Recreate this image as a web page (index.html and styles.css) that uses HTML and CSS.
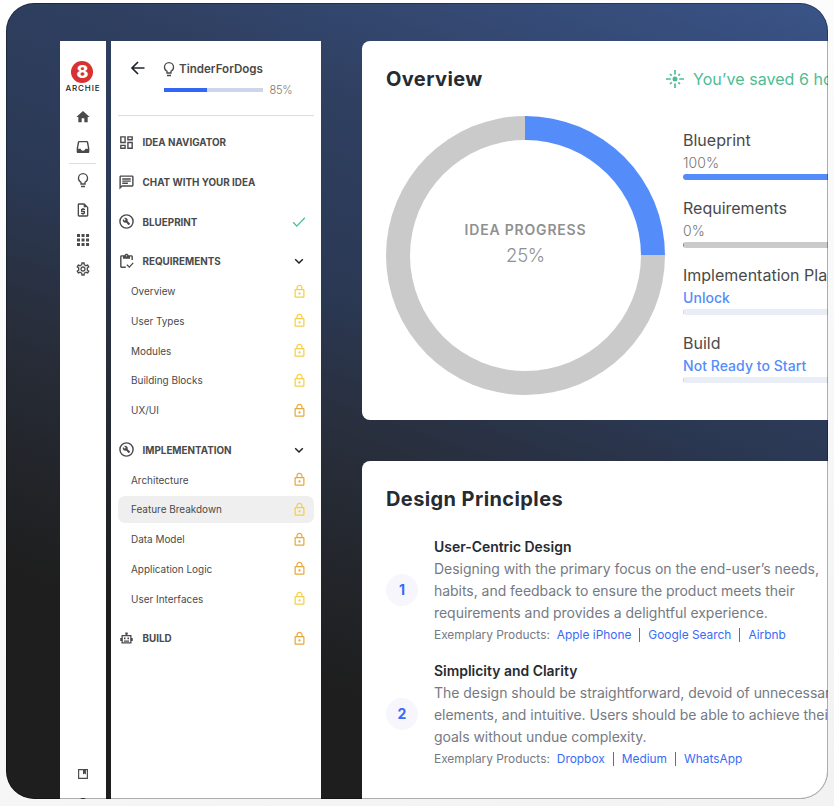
FILE: index.html
```html
<!DOCTYPE html>
<html lang="en">
<head>
  <meta charset="UTF-8" />
  <meta name="viewport" content="width=device-width, initial-scale=1.0" />
  <title>Archie - TinderForDogs</title>
  <link rel="stylesheet" href="styles.css">
</head>
<body>
  <svg class="sprite">
    <symbol id="home" viewBox="0 0 24 24"><path d="M10 20v-6h4v6h5v-8h3L12 3 2 12h3v8z"/></symbol>
    <symbol id="inbox" viewBox="0 0 24 24"><path d="M6 3h12c.9 0 1.600.6 1.800 1.500L21.500 14v5c0 1.100-.9 2-2 2h-15c-1.100 0-2-.9-2-2v-5L4.200 4.500C4.400 3.600 5.100 3 6 3zm.3 2L4.500 14.500H8.500c.3 1.700 1.700 3 3.500 3s3.200-1.300 3.500-3h4L17.700 5z"/></symbol>
    <symbol id="bulb" viewBox="0 0 24 24"><path d="M9 18h6v-2.600c2.200-1.100 3.800-3.400 3.800-6.100A6.800 6.800 0 0 0 5.200 9.300c0 2.700 1.600 5 3.800 6.100zM9 21.800h6" fill="none" stroke="currentColor" stroke-width="2"/></symbol>
    <symbol id="quote" viewBox="0 0 24 24"><path d="M14 2H6c-1.100 0-2 .9-2 2v16c0 1.100.9 2 2 2h12c1.100 0 2-.9 2-2V8l-6-6zM6 20V4h7v4h5v12H6zm5-1h2v-1h1c.55 0 1-.45 1-1v-3c0-.55-.45-1-1-1h-3v-1h4v-2h-2V9h-2v1h-1c-.55 0-1 .45-1 1v3c0 .55.45 1 1 1h3v1H9v2h2v1z"/></symbol>
    <symbol id="apps" viewBox="0 0 24 24"><path d="M3 3h4.500v4.500H3zM9.800 3h4.500v4.500H9.800zM16.600 3h4.500v4.500h-4.500zM3 9.800h4.500v4.500H3zM9.800 9.800h4.500v4.500H9.800zM16.600 9.800h4.500v4.500h-4.500zM3 16.600h4.500v4.500H3zM9.800 16.600h4.500v4.500H9.800zM16.600 16.600h4.500v4.500h-4.500z"/></symbol>
    <symbol id="gear" viewBox="0 0 24 24"><path d="M19.43 12.98c.04-.32.07-.64.07-.98 0-.34-.03-.66-.07-.98l2.110-1.650c.19-.15.24-.42.12-.64l-2-3.460c-.09-.16-.26-.25-.44-.25-.06 0-.12.01-.17.03l-2.490 1c-.52-.4-1.080-.73-1.690-.98l-.38-2.650C14.460 2.180 14.250 2 14 2h-4c-.25 0-.46.18-.49.42l-.38 2.650c-.61.25-1.170.59-1.690.98l-2.490-1c-.06-.02-.12-.03-.18-.03-.17 0-.34.09-.43.25l-2 3.460c-.13.22-.07.49.12.64l2.110 1.650c-.04.32-.07.65-.07.98 0 .33.03.66.07.98l-2.110 1.650c-.19.15-.24.42-.12.64l2 3.460c.09.16.26.25.44.25.06 0 .12-.01.17-.03l2.490-1c.52.4 1.080.73 1.690.98l.38 2.650c.03.24.24.42.49.42h4c.25 0 .46-.18.49-.42l.38-2.650c.61-.25 1.170-.59 1.690-.98l2.490 1c.06.02.12.03.18.03.17 0 .34-.09.43-.25l2-3.460c.12-.22.07-.49-.12-.64l-2.110-1.650zm-1.980-1.710c.04.31.05.52.05.73 0 .21-.02.43-.05.73l-.14 1.130.89.7 1.080.84-.7 1.210-1.270-.51-1.040-.42-.9.68c-.43.32-.84.56-1.250.73l-1.060.43-.16 1.130-.2 1.350h-1.400l-.19-1.350-.16-1.130-1.060-.43c-.43-.18-.83-.41-1.230-.71l-.91-.7-1.060.43-1.270.51-.7-1.210 1.080-.84.89-.7-.14-1.130c-.03-.31-.05-.54-.05-.74s.02-.43.05-.73l.14-1.130-.89-.7-1.080-.84.7-1.210 1.270.51 1.040.42.9-.68c.43-.32.84-.56 1.250-.73l1.060-.43.16-1.130.2-1.350h1.390l.19 1.350.16 1.130 1.060.43c.43.18.83.41 1.230.71l.91.7 1.060-.43 1.270-.51.7 1.210-1.070.85-.89.7.14 1.130zM12 8c-2.210 0-4 1.790-4 4s1.790 4 4 4 4-1.790 4-4-1.790-4-4-4zm0 6c-1.100 0-2-.9-2-2s.9-2 2-2 2 .9 2 2-.9 2-2 2z"/></symbol>
    <symbol id="book" viewBox="0 0 24 24"><path d="M4.500 4.500h15v15h-15z" fill="none" stroke="currentColor" stroke-width="2"/><path d="M12 5h5v8l-2.500-2-2.500 2z"/></symbol>
    <symbol id="dashboard" viewBox="0 0 24 24"><path d="M19 5v2h-4V5h4M9 5v6H5V5h4m10 8v6h-4v-6h4M9 17v2H5v-2h4M21 3h-8v6h8V3zM11 3H3v10h8V3zm10 8h-8v10h8V11zm-10 4H3v6h8v-6z"/></symbol>
    <symbol id="chat" viewBox="0 0 24 24"><path d="M4 4h16v12H5.170L4 17.170V4m0-2c-1.100 0-2 .9-2 2v18l4-4h14c1.100 0 2-.9 2-2V4c0-1.100-.9-2-2-2H4zm2 10h8v2H6v-2zm0-3h12v2H6V9zm0-3h12v2H6V6z"/></symbol>
    <symbol id="wrench" viewBox="0 0 24 24"><circle cx="12" cy="12" r="9.300" fill="none" stroke="currentColor" stroke-width="2"/><path d="M13.490 11.380c.43-1.220.17-2.640-.81-3.620-1.110-1.110-2.790-1.300-4.100-.59l2.350 2.350-1.410 1.410-2.350-2.350c-.71 1.320-.52 2.990.59 4.100.98.98 2.400 1.240 3.620.81l3.410 3.410c.2.2.51.2.71 0l1.400-1.400c.2-.2.2-.51 0-.71l-3.410-3.410z"/></symbol>
    <symbol id="clipboard" viewBox="0 0 24 24"><path d="M5 5h2v3h10V5h2v5h2V5c0-1.100-.9-2-2-2h-4.180C14.400 1.840 13.300 1 12 1s-2.400.84-2.820 2H5c-1.100 0-2 .9-2 2v14c0 1.100.9 2 2 2h6v-2H5V5zm7-2c.55 0 1 .45 1 1s-.45 1-1 1-1-.45-1-1 .45-1 1-1z"/><path d="M12.500 16.500l3.500 3.500 5.500-6" fill="none" stroke="currentColor" stroke-width="1.800"/></symbol>
    <symbol id="robot" viewBox="0 0 24 24"><path d="M5 7.500h14v11.500H5zM12 7V4M8 16h8" fill="none" stroke="currentColor" stroke-width="2"/><path d="M10 2.500h4v3h-4zM2 11h3v5H2zM19 11h3v5h-3zM8 10.500h2.500V13H8zM13.500 10.500H16V13h-2.500z"/></symbol>
    <symbol id="lock" viewBox="0 0 24 24"><path d="M18 8h-1V6c0-2.760-2.240-5-5-5S7 3.240 7 6v2H6c-1.100 0-2 .9-2 2v10c0 1.100.9 2 2 2h12c1.100 0 2-.9 2-2V10c0-1.100-.9-2-2-2zM9 6c0-1.660 1.340-3 3-3s3 1.340 3 3v2H9V6zm9 14H6V10h12v10zm-6-3.200c1 0 1.800-.8 1.800-1.800s-.8-1.800-1.800-1.800-1.800.8-1.800 1.800.8 1.800 1.800 1.800z"/></symbol>
    <symbol id="chevron" viewBox="0 0 12 12"><path d="M2.200 4.200L6 8l3.800-3.800" fill="none" stroke="currentColor" stroke-width="1.500"/></symbol>
    <symbol id="check" viewBox="0 0 14 12"><path d="M1.200 6.200l3.600 3.900 8-8.400" fill="none" stroke="currentColor" stroke-width="1.300"/></symbol>
    <symbol id="back" viewBox="0 0 16 16"><path d="M14.500 8H2.200M8 2L2 8l6 6" fill="none" stroke="currentColor" stroke-width="1.700"/></symbol>
    <symbol id="spark" viewBox="0 0 18 18"><circle cx="9" cy="9" r="2.500"/><path d="M9 0v4.500M9 13.500V18M0 9h4.800M13.200 9H18M4 4l1.700 1.700M12.300 12.300L14 14M4 14l1.700-1.700M12.300 5.700L14 4" fill="none" stroke="currentColor" stroke-width="1.700"/></symbol>
  </svg>

  <div class="frame">
    <nav class="rail">
      <div class="logo">
        <div class="logo-mark">8</div>
        <div class="logo-name">ARCHIE</div>
      </div>
      <div class="rail-icons">
        <svg><use href="#home"/></svg>
        <svg><use href="#inbox"/></svg>
        <hr>
        <svg><use href="#bulb"/></svg>
        <svg><use href="#quote"/></svg>
        <svg><use href="#apps"/></svg>
        <svg><use href="#gear"/></svg>
      </div>
      <div class="rail-bottom">
        <svg><use href="#book"/></svg>
        <span class="avatar"></span>
      </div>
    </nav>

    <aside class="panel">
      <div class="project">
        <svg class="back"><use href="#back"/></svg>
        <div class="project-info">
          <div class="project-name"><svg><use href="#bulb"/></svg>TinderForDogs</div>
          <div class="project-progress"><div class="track"><div class="fill"></div></div>85%</div>
        </div>
      </div>

      <div class="menu">
        <div class="head"><svg><use href="#dashboard"/></svg>IDEA NAVIGATOR</div>
        <div class="head"><svg><use href="#chat"/></svg>CHAT WITH YOUR IDEA</div>
        <div class="head"><svg><use href="#wrench"/></svg>BLUEPRINT<svg class="end check"><use href="#check"/></svg></div>
        <div class="head"><svg><use href="#clipboard"/></svg>REQUIREMENTS<svg class="end chevron"><use href="#chevron"/></svg></div>
        <div class="item">Overview<svg class="end lock"><use href="#lock"/></svg></div>
        <div class="item">User Types<svg class="end lock"><use href="#lock"/></svg></div>
        <div class="item">Modules<svg class="end lock"><use href="#lock"/></svg></div>
        <div class="item">Building Blocks<svg class="end lock"><use href="#lock"/></svg></div>
        <div class="item">UX/UI<svg class="end lock orange"><use href="#lock"/></svg></div>
        <div class="head"><svg><use href="#wrench"/></svg>IMPLEMENTATION<svg class="end chevron"><use href="#chevron"/></svg></div>
        <div class="item">Architecture<svg class="end lock orange"><use href="#lock"/></svg></div>
        <div class="item active">Feature Breakdown<svg class="end lock"><use href="#lock"/></svg></div>
        <div class="item">Data Model<svg class="end lock orange"><use href="#lock"/></svg></div>
        <div class="item">Application Logic<svg class="end lock orange"><use href="#lock"/></svg></div>
        <div class="item">User Interfaces<svg class="end lock"><use href="#lock"/></svg></div>
        <div class="head"><svg class="robot"><use href="#robot"/></svg>BUILD<svg class="end lock orange"><use href="#lock"/></svg></div>
      </div>
    </aside>

    <main class="content">
      <section class="card overview">
        <div class="card-head">
          <h2>Overview</h2>
          <div class="saved"><svg><use href="#spark"/></svg>You’ve saved 6 hours</div>
        </div>
        <div class="overview-body">
          <div class="donut">
            <div class="donut-hole">
              <div class="donut-label">IDEA PROGRESS</div>
              <div class="donut-value">25%</div>
            </div>
          </div>
          <div class="stats">
            <div class="stat"><h3>Blueprint</h3><p>100%</p><div class="bar full"></div></div>
            <div class="stat"><h3>Requirements</h3><p>0%</p><div class="bar empty"></div></div>
            <div class="stat"><h3>Implementation Plan</h3><p class="blue">Unlock</p><div class="bar"></div></div>
            <div class="stat"><h3>Build</h3><p class="blue">Not Ready to Start</p><div class="bar"></div></div>
          </div>
        </div>
      </section>

      <section class="card principles">
        <div class="card-head"><h2>Design Principles</h2></div>
        <div class="principle">
          <div class="number">1</div>
          <div class="principle-text">
            <h4>User-Centric Design</h4>
            <p>Designing with the primary focus on the end-user’s needs,<br>habits, and feedback to ensure the product meets their<br>requirements and provides a delightful experience.</p>
            <div class="examples"><span>Exemplary Products:</span><a>Apple iPhone</a><a>Google Search</a><a>Airbnb</a></div>
          </div>
        </div>
        <div class="principle">
          <div class="number">2</div>
          <div class="principle-text">
            <h4>Simplicity and Clarity</h4>
            <p>The design should be straightforward, devoid of unnecessary<br>elements, and intuitive. Users should be able to achieve their<br>goals without undue complexity.</p>
            <div class="examples"><span>Exemplary Products:</span><a>Dropbox</a><a>Medium</a><a>WhatsApp</a></div>
          </div>
        </div>
      </section>
    </main>
  </div>
</body>
</html>
```

FILE: styles.css
```css
* {
  box-sizing: border-box;
}

body {
  margin: 0;
  padding: 3px 6px 7px;
  height: 806px;
  overflow: hidden;
  background: linear-gradient(160deg, #ffffff, #f9f9f9 50%, #f2f2f2);
  font-family: Inter, sans-serif;
  color: #4a4a4a;
}

h2, h3, h4, p {
  margin: 0;
}

svg {
  fill: currentColor;
  flex: none;
}

.sprite {
  display: none;
}

.frame {
  display: flex;
  position: relative;
  width: 822px;
  height: 796px;
  padding: 38px 0 0 53.5px;
  border-radius: 28px;
  overflow: hidden;
  background: linear-gradient(200deg, #3a5488 0%, #2f3f60 25%, #2b3955 42%, #282e3b 56%, #23262c 67%, #1e1e1e 79%);
}

/* thin edge drawn above the cards */
.frame::after {
  content: "";
  position: absolute;
  inset: 0;
  border: 1px solid rgba(0, 0, 0, 0.32);
  border-radius: 28px;
}

.rail {
  display: flex;
  flex-direction: column;
  align-items: center;
  flex: none;
  width: 46px;
  background: #fff;
}

.logo {
  margin-top: 20px;
  text-align: center;
}

.logo-mark {
  width: 22px;
  height: 22px;
  margin: 0 auto;
  border-radius: 50%;
  background: #d93032;
  color: #fff;
  font: 800 18px/22px Inter, sans-serif;
}

.logo-name {
  font-size: 8px;
  line-height: 10px;
  font-weight: 500;
  letter-spacing: 0.9px;
  margin-right: -0.9px;
  color: #222;
}

.rail-icons {
  display: flex;
  flex-direction: column;
  align-items: center;
  gap: 13.7px;
  margin-top: 16.3px;
}

.rail-icons svg {
  width: 16px;
  height: 16px;
}

.rail-icons hr {
  width: 27px;
  height: 1.5px;
  margin: -6px 0 -5.5px;
  border: none;
  background: #ddd;
}

.rail-bottom {
  display: flex;
  flex-direction: column;
  align-items: center;
  gap: 17px;
  height: 32px;
  margin-top: auto;
}

.rail-bottom svg {
  width: 14px;
  height: 14px;
}

.avatar {
  flex: none;
  width: 10px;
  height: 10px;
  border-radius: 50%;
  background: #444;
}

.panel {
  flex: none;
  width: 210px;
  margin-left: 5.5px;
  padding: 0 7px;
  background: #fff;
}

.project {
  display: flex;
  height: 75px;
  padding: 19px 0 0 11.5px;
  border-bottom: 1.5px solid #ddd;
}

.back {
  width: 16px;
  height: 16px;
  color: #20252b;
}

.project-info {
  margin-left: 18px;
}

.project-name {
  display: flex;
  align-items: center;
  gap: 2.5px;
  height: 17px;
  font-size: 11.6px;
  font-weight: 600;
}

.project-name svg {
  width: 16px;
  height: 16px;
  margin-left: -3px;
}

.project-progress {
  display: flex;
  align-items: center;
  gap: 7px;
  height: 16px;
  margin-top: 5px;
  font-size: 11px;
  font-weight: 300;
  letter-spacing: -0.2px;
  color: #777;
}

.track {
  width: 99px;
  height: 3.5px;
  background: #ccd5ea;
}

.fill {
  width: 43px;
  height: 3.5px;
  background: #3466f6;
}

.menu {
  display: flex;
  flex-direction: column;
  gap: 3px;
  padding-top: 3px;
}

.head,
.item {
  display: flex;
  align-items: center;
  height: 26.75px;
  padding: 0 7px 0 13px;
  border-radius: 7px;
  font-size: 9.95px;
}

.head {
  gap: 8px;
  margin-top: 9.95px;
  padding-left: 0;
  font-size: 9.85px;
  font-weight: 700;
}

.head svg {
  width: 17px;
  height: 17px;
  margin-left: -0.5px;
}

.head .robot {
  width: 15px;
  height: 15px;
  margin: 0 1px 0 0.5px;
}

.active {
  background: #efefef;
}

.menu .end {
  margin-left: auto;
}

.menu .lock {
  width: 15px;
  height: 15px;
  color: #f6cf45;
}

.menu .orange {
  color: #e8a93c;
}

.menu .check {
  width: 14px;
  height: 12px;
  margin-right: 1px;
  color: #4dbd92;
}

.menu .chevron {
  width: 12px;
  height: 12px;
  margin-right: 2px;
  color: #222;
}

.content {
  flex: none;
  width: 560px;
  margin-left: 41px;
}

.card {
  height: 378.5px;
  padding: 0 24px;
  border-radius: 8px;
  background: #fff;
}

.principles {
  margin-top: 41px;
}

.card-head {
  display: flex;
  align-items: center;
  height: 75px;
  padding-top: 1px;
}

h2 {
  width: 280px;
  font-size: 20px;
  font-weight: 700;
  letter-spacing: 0.4px;
  color: #262b31;
}

.saved {
  display: flex;
  align-items: center;
  gap: 9px;
  font-size: 16px;
  letter-spacing: 0.05px;
  white-space: nowrap;
  color: #4dbd92;
}

.saved svg {
  width: 18px;
  height: 18px;
}

.overview-body {
  display: flex;
  padding-top: 0.4px;
}

.donut {
  display: flex;
  flex: none;
  width: 279px;
  height: 279px;
  padding: 24px;
  border-radius: 50%;
  background: conic-gradient(#548dfa 25%, #cacaca 0);
}

.donut-hole {
  flex: 1;
  padding-top: 78px;
  border-radius: 50%;
  background: #fff;
  text-align: center;
  color: #909090;
}

.donut-label {
  font-size: 14px;
  line-height: 24px;
  font-weight: 600;
  letter-spacing: 0.8px;
}

.donut-value {
  font-size: 18.5px;
  line-height: 26px;
  font-weight: 300;
  letter-spacing: -0.3px;
}

.stats {
  flex: 1;
  margin: 11px 0 0 18px;
}

.stat {
  height: 67.4px;
}

.stat h3 {
  font-size: 16px;
  line-height: 26px;
  font-weight: 400;
}

.stat p {
  font-size: 14px;
  line-height: 19px;
  font-weight: 300;
  letter-spacing: 0.1px;
  color: #777;
}

.stat .blue {
  font-weight: 500;
  letter-spacing: 0.05px;
  color: #548dfa;
}

.bar {
  height: 6px;
  margin-top: 2px;
  border-radius: 3px;
  background: linear-gradient(to right, #bcd2fb 1px, #e9eef6 1px);
}

.bar.full {
  background: #548dfa;
}

.bar.empty {
  background: linear-gradient(to right, #548dfa 1px, #cacaca 1px);
}

.principle {
  display: flex;
  align-items: center;
  gap: 16px;
  margin-bottom: 14px;
}

.number {
  width: 32px;
  height: 32px;
  margin-top: -2px;
  border-radius: 50%;
  background: #f6f6fc;
  color: #3a6bf6;
  font-size: 14px;
  line-height: 32px;
  font-weight: 700;
  text-align: center;
}

.principle-text {
  font-size: 14px;
  line-height: 22px;
  white-space: nowrap;
  color: #757a83;
}

h4 {
  font-size: 13.95px;
  font-weight: 600;
  color: #262b31;
}

.principle-text p {
  letter-spacing: -0.04px;
}

.examples {
  display: flex;
  align-items: center;
  font-size: 11.9px;
}

.examples span {
  margin-right: 7px;
}

.examples a {
  line-height: 14px;
  color: #3a6bf6;
}

.examples a + a {
  margin-left: 8px;
  padding-left: 8px;
  border-left: 1px solid #3a6bf6;
}
```
